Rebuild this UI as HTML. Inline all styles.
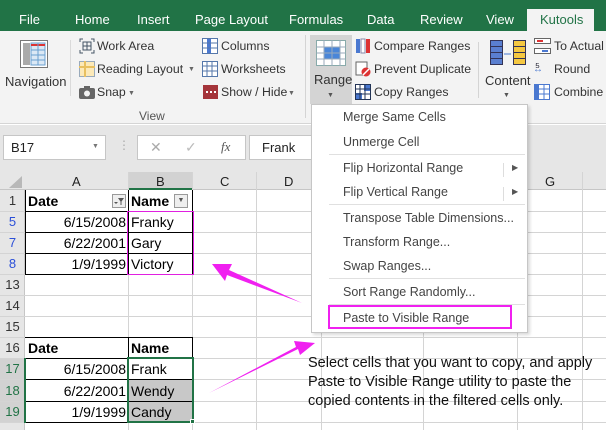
<!DOCTYPE html>
<html><head><meta charset="utf-8"><style>
*{margin:0;padding:0;box-sizing:border-box}
body{width:606px;height:430px;overflow:hidden;position:relative;background:#fff;font-family:"Liberation Sans",sans-serif;font-size:13px;color:#222}
.a{position:absolute;white-space:nowrap}
.tab{position:absolute;top:12px;color:#fff;font-size:13px}
.rb{color:#333;font-size:12.3px}
.vl{position:absolute;background:#d4d4d4;width:1px}
.hl{position:absolute;background:#d4d4d4;height:1px}
.rh{position:absolute;left:0;width:25px;text-align:center;font-size:13px;color:#333}
.cell{position:absolute;font-size:14px;color:#000}
.mi{position:absolute;left:343px;font-size:12.5px;color:#444}
.sep{position:absolute;left:329px;width:196px;height:1px;background:#e0e0e0}
</style></head><body>
<div class="a" style="left:0;top:0;width:606px;height:31px;background:#217346"></div>
<div class="tab" style="left:19px">File</div>
<div class="tab" style="left:75px">Home</div>
<div class="tab" style="left:137px">Insert</div>
<div class="tab" style="left:195px">Page Layout</div>
<div class="tab" style="left:289px">Formulas</div>
<div class="tab" style="left:367px">Data</div>
<div class="tab" style="left:420px">Review</div>
<div class="tab" style="left:486px">View</div>
<div class="a" style="left:527px;top:9px;width:67px;height:22px;background:#f3f3f3"></div>
<div class="tab" style="left:540px;color:#217346">Kutools</div>
<div class="a" style="left:0;top:31px;width:606px;height:93px;background:#f3f3f3;border-bottom:1px solid #d5d5d5"></div>
<svg class="a" style="left:20px;top:40px" width="28" height="28"><rect x="0.5" y="0.5" width="27" height="27" fill="#fff" stroke="#777"/><rect x="3" y="3" width="7" height="22" fill="#aaa"/><rect x="11" y="3" width="14" height="22" fill="#dbe8f5" stroke="#6a9fd0"/><line x1="11" y1="5" x2="25" y2="5" stroke="#d33" stroke-width="2"/><path d="M11 10H25M11 15H25M11 20H25M18 3V25" stroke="#6a9fd0"/></svg>
<div class="a rb" style="left:5px;top:74px;font-size:13px">Navigation</div>
<div class="vl" style="left:70px;top:40px;height:56px;background:#dadada"></div>
<svg class="a" style="left:79px;top:38px" width="16" height="16"><path d="M1 4V1H4M12 1H15V4M15 12V15H12M4 15H1V12" fill="none" stroke="#456" /><rect x="4" y="4" width="8" height="8" fill="none" stroke="#456"/><path d="M4 8H12M8 4V12" stroke="#456"/></svg>
<div class="a rb" style="left:97px;top:39px">Work Area</div>
<svg class="a" style="left:79px;top:61px" width="16" height="16"><rect x="0.5" y="0.5" width="15" height="15" fill="#fce9b8" stroke="#9ab"/><path d="M0 6H16M6 0V16" stroke="#e8c060" stroke-width="2"/></svg>
<div class="a rb" style="left:97px;top:62px">Reading Layout</div>
<div class="a" style="left:188px;top:66px;font-size:7px;color:#666">▼</div>
<svg class="a" style="left:79px;top:85px" width="16" height="14"><rect x="0" y="3" width="16" height="11" rx="2" fill="#666"/><rect x="5" y="1" width="6" height="3" fill="#666"/><circle cx="8" cy="8.5" r="3" fill="#f3f3f3"/></svg>
<div class="a rb" style="left:97px;top:85px">Snap</div>
<div class="a" style="left:128px;top:90px;font-size:7px;color:#666">▼</div>
<svg class="a" style="left:202px;top:38px" width="16" height="16"><rect x="0.5" y="0.5" width="15" height="15" fill="#fff" stroke="#5577aa"/><rect x="5" y="1" width="4" height="14" fill="#4a78d0"/><path d="M0.5 5H15.5M0.5 10H15.5" stroke="#5577aa"/></svg>
<div class="a rb" style="left:221px;top:39px">Columns</div>
<svg class="a" style="left:202px;top:61px" width="16" height="16"><rect x="0.5" y="0.5" width="15" height="15" fill="#fff" stroke="#5577aa"/><path d="M0.5 5H15.5M0.5 10H15.5M5 0V16M10 0V16" stroke="#5577aa"/></svg>
<div class="a rb" style="left:221px;top:62px">Worksheets</div>
<svg class="a" style="left:203px;top:85px" width="15" height="14"><rect width="15" height="14" fill="#a4343a"/><path d="M3 7h2M7 7h2M11 7h2" stroke="#fff" stroke-width="2"/></svg>
<div class="a rb" style="left:221px;top:85px">Show / Hide</div>
<div class="a" style="left:288px;top:90px;font-size:7px;color:#666">▼</div>
<div class="a" style="left:139px;top:109px;font-size:12px;color:#555">View</div>
<div class="vl" style="left:305px;top:35px;height:83px"></div>
<div class="a" style="left:310px;top:35px;width:42px;height:69px;background:#d4d4d4"></div>
<svg class="a" style="left:316px;top:40px" width="30" height="26"><rect x="0.5" y="0.5" width="29" height="25" fill="#fff" stroke="#8aa"/><rect x="8" y="7" width="16" height="12" fill="#4a86d8"/><path d="M0.5 7H29.5M0.5 13H29.5M0.5 19H29.5M8 0V26M16 0V26M24 0V26" stroke="#9ab"/></svg>
<div class="a rb" style="left:314px;top:72px;font-size:13px">Range</div>
<div class="a" style="left:327px;top:92px;font-size:7px;color:#555">▼</div>
<svg class="a" style="left:355px;top:38px" width="16" height="16"><rect x="1" y="1" width="4" height="14" fill="#4a78d0"/><rect x="6" y="1" width="4" height="14" fill="#fff" stroke="#88a"/><rect x="11" y="1" width="4" height="14" fill="#d33"/></svg>
<div class="a rb" style="left:374px;top:39px">Compare Ranges</div>
<svg class="a" style="left:355px;top:61px" width="16" height="16"><rect x="1" y="1" width="11" height="13" fill="#fff" stroke="#666"/><circle cx="11" cy="11" r="4.5" fill="#d33"/><path d="M8 14L14 8" stroke="#fff" stroke-width="1.5"/></svg>
<div class="a rb" style="left:374px;top:62px">Prevent Duplicate</div>
<svg class="a" style="left:355px;top:84px" width="16" height="16"><rect x="0.5" y="0.5" width="15" height="15" fill="#fff" stroke="#235"/><rect x="1" y="9" width="6" height="6" fill="#4a78d0"/><rect x="9" y="1" width="6" height="6" fill="#4a78d0"/><path d="M0 5H16M0 10H16M5 0V16M10 0V16" stroke="#235"/></svg>
<div class="a rb" style="left:374px;top:85px">Copy Ranges</div>
<div class="vl" style="left:478px;top:42px;height:56px"></div>
<svg class="a" style="left:490px;top:40px" width="38" height="30"><g stroke="#335"><rect x="0.5" y="0.5" width="12" height="6" fill="#5a7fd0"/><rect x="0.5" y="6.5" width="12" height="6" fill="#5a7fd0"/><rect x="0.5" y="12.5" width="12" height="6" fill="#5a7fd0"/><rect x="0.5" y="18.5" width="12" height="6" fill="#5a7fd0"/><rect x="23.5" y="0.5" width="12" height="6" fill="#f5c842"/><rect x="23.5" y="6.5" width="12" height="6" fill="#f5c842"/><rect x="23.5" y="12.5" width="12" height="6" fill="#f5c842"/><rect x="23.5" y="18.5" width="12" height="6" fill="#f5c842"/></g><path d="M14 14H21" stroke="#4a78d0"/></svg>
<div class="a rb" style="left:485px;top:73px;font-size:13px">Content</div>
<div class="a" style="left:503px;top:92px;font-size:7px;color:#555">▼</div>
<svg class="a" style="left:534px;top:38px" width="17" height="16"><rect x="0.5" y="0.5" width="16" height="5" fill="#fff" stroke="#666"/><rect x="0.5" y="10.5" width="16" height="5" fill="#fff" stroke="#666"/><path d="M3 3H9" stroke="#d33" stroke-width="2"/><path d="M8 13H14" stroke="#4a78d0" stroke-width="2"/></svg>
<div class="a rb" style="left:554px;top:39px">To Actual</div>
<div class="a" style="left:535px;top:60px;font-size:12px;color:#223">⁵</div>
<div class="a" style="left:533px;top:64px;font-size:10px;color:#4a78d0">↔</div>
<div class="a rb" style="left:554px;top:62px">Round</div>
<svg class="a" style="left:534px;top:84px" width="16" height="16"><rect x="0.5" y="0.5" width="15" height="15" fill="#fff" stroke="#4a78d0"/><rect x="1" y="1" width="4" height="14" fill="#4a78d0"/><path d="M0 5H16M0 10H16M10 0V16" stroke="#4a78d0"/></svg>
<div class="a rb" style="left:554px;top:85px">Combine</div>
<div class="a" style="left:0;top:125px;width:606px;height:47px;background:#e6e6e6"></div>
<div class="a" style="left:3px;top:135px;width:103px;height:25px;background:#fff;border:1px solid #c6c6c6"></div>
<div class="a" style="left:11px;top:140px;font-size:13px">B17</div>
<div class="a" style="left:92px;top:143px;font-size:7px;color:#777">▼</div>
<div class="a" style="left:118px;top:138px;color:#aaa;font-size:12px">⋮</div>
<div class="a" style="left:137px;top:135px;width:109px;height:25px;background:#fff;border:1px solid #c6c6c6"></div>
<div class="a" style="left:150px;top:139px;color:#aaa;font-size:14px">✕</div>
<div class="a" style="left:185px;top:139px;color:#bbb;font-size:14px">✓</div>
<div class="a" style="left:221px;top:139px;color:#555;font-size:13px;font-style:italic;font-family:'Liberation Serif',serif">fx</div>
<div class="a" style="left:249px;top:135px;width:70px;height:25px;background:#fff;border:1px solid #c6c6c6"></div>
<div class="a" style="left:262px;top:140px;font-size:13px">Frank</div>
<div class="a" style="left:0;top:172px;width:606px;height:18px;background:#e6e6e6;border-bottom:1px solid #c6c6c6"></div>
<div class="a" style="left:0;top:190px;width:25px;height:240px;background:#e6e6e6;border-right:1px solid #c6c6c6"></div>
<svg class="a" style="left:6px;top:175px" width="17" height="14"><path d="M16 1V13H3Z" fill="#b8b8b8"/></svg>
<div class="a" style="left:128px;top:172px;width:64px;height:18px;background:#d2d2d2;border-bottom:2px solid #217346"></div>
<div class="a" style="left:0;top:358px;width:25px;height:64px;background:#d2d2d2"></div>
<div class="a" style="left:72px;top:174px;font-size:13px">A</div>
<div class="a" style="left:156px;top:174px;font-size:13px">B</div>
<div class="a" style="left:220px;top:174px;font-size:13px">C</div>
<div class="a" style="left:284px;top:174px;font-size:13px">D</div>
<div class="a" style="left:545px;top:174px;font-size:13px">G</div>
<div class="vl" style="left:128px;top:172px;height:258px"></div>
<div class="vl" style="left:192px;top:172px;height:258px"></div>
<div class="vl" style="left:256px;top:172px;height:258px"></div>
<div class="vl" style="left:321px;top:172px;height:258px"></div>
<div class="vl" style="left:423px;top:172px;height:258px"></div>
<div class="vl" style="left:517px;top:172px;height:258px"></div>
<div class="vl" style="left:582px;top:172px;height:258px"></div>
<div class="hl" style="left:0;top:211px;width:606px"></div>
<div class="hl" style="left:0;top:232px;width:606px"></div>
<div class="hl" style="left:0;top:253px;width:606px"></div>
<div class="hl" style="left:0;top:274px;width:606px"></div>
<div class="hl" style="left:0;top:295px;width:606px"></div>
<div class="hl" style="left:0;top:316px;width:606px"></div>
<div class="hl" style="left:0;top:337px;width:606px"></div>
<div class="hl" style="left:0;top:358px;width:606px"></div>
<div class="hl" style="left:0;top:379px;width:606px"></div>
<div class="hl" style="left:0;top:401px;width:606px"></div>
<div class="hl" style="left:0;top:422px;width:606px"></div>
<div class="rh" style="top:193px">1</div>
<div class="rh" style="top:214px;color:#2b4fd8">5</div>
<div class="rh" style="top:235px;color:#2b4fd8">7</div>
<div class="rh" style="top:256px;color:#2b4fd8">8</div>
<div class="rh" style="top:277px">13</div>
<div class="rh" style="top:298px">14</div>
<div class="rh" style="top:319px">15</div>
<div class="rh" style="top:340px">16</div>
<div class="rh" style="top:361px;color:#217346">17</div>
<div class="rh" style="top:383px;color:#217346">18</div>
<div class="rh" style="top:404px;color:#217346">19</div>
<div class="a" style="left:25px;top:190px;width:168px;height:85px;border:1px solid #000;border-top:none"></div>
<div class="a" style="left:128px;top:190px;width:1px;height:85px;background:#000"></div>
<div class="a" style="left:25px;top:211px;width:168px;height:1px;background:#000"></div>
<div class="a" style="left:25px;top:232px;width:168px;height:1px;background:#000"></div>
<div class="a" style="left:25px;top:253px;width:168px;height:1px;background:#000"></div>
<div class="a" style="left:127px;top:211px;width:67px;height:64px;border:1px solid #e020e0"></div>
<div class="cell" style="left:28px;top:193px;font-weight:bold">Date</div>
<svg class="a" style="left:112px;top:194px" width="14" height="14"><rect x="0.5" y="0.5" width="13" height="13" fill="#eee" stroke="#999"/><path d="M6 4H12L9.5 7.5V11H8.5V7.5Z" fill="#555"/><path d="M2 8L4 10L6 8Z" fill="#555"/></svg>
<div class="cell" style="left:131px;top:193px;font-weight:bold">Name</div>
<div class="a" style="left:174px;top:194px;width:14px;height:14px;border:1px solid #999;background:#eee;font-size:7px;text-align:center;line-height:12px;color:#555">▼</div>
<div class="cell" style="left:25px;width:101px;text-align:right;top:214px">6/15/2008</div>
<div class="cell" style="left:131px;top:214px">Franky</div>
<div class="cell" style="left:25px;width:101px;text-align:right;top:235px">6/22/2001</div>
<div class="cell" style="left:131px;top:235px">Gary</div>
<div class="cell" style="left:25px;width:101px;text-align:right;top:256px">1/9/1999</div>
<div class="cell" style="left:131px;top:256px">Victory</div>
<div class="a" style="left:129px;top:380px;width:63px;height:42px;background:#c8c8c8"></div>
<div class="a" style="left:25px;top:337px;width:168px;height:86px;border:1px solid #000;border-left:none"></div>
<div class="a" style="left:128px;top:337px;width:1px;height:86px;background:#000"></div>
<div class="a" style="left:25px;top:358px;width:168px;height:1px;background:#000"></div>
<div class="a" style="left:25px;top:379px;width:168px;height:1px;background:#000"></div>
<div class="a" style="left:25px;top:401px;width:168px;height:1px;background:#000"></div>
<div class="a" style="left:24px;top:358px;width:2px;height:65px;background:#217346"></div>
<div class="a" style="left:127px;top:357px;width:67px;height:66px;border:2px solid #217346"></div>
<div class="a" style="left:190px;top:419px;width:5px;height:5px;background:#217346;border:1px solid #fff"></div>
<div class="cell" style="left:28px;top:340px;font-weight:bold">Date</div>
<div class="cell" style="left:131px;top:340px;font-weight:bold">Name</div>
<div class="cell" style="left:25px;width:101px;text-align:right;top:361px">6/15/2008</div>
<div class="cell" style="left:131px;top:361px">Frank</div>
<div class="cell" style="left:25px;width:101px;text-align:right;top:383px">6/22/2001</div>
<div class="cell" style="left:131px;top:383px">Wendy</div>
<div class="cell" style="left:25px;width:101px;text-align:right;top:404px">1/9/1999</div>
<div class="cell" style="left:131px;top:404px">Candy</div>
<div class="a" style="left:311px;top:104px;width:217px;height:229px;background:#fff;border:1px solid #c6c6c6;box-shadow:2px 2px 3px rgba(0,0,0,.15)"></div>
<div class="mi" style="top:110px">Merge Same Cells</div>
<div class="mi" style="top:135px">Unmerge Cell</div>
<div class="sep" style="top:154px"></div>
<div class="mi" style="top:161px">Flip Horizontal Range</div>
<div class="mi" style="top:185px">Flip Vertical Range</div>
<div class="a" style="left:503px;top:163px;width:1px;height:14px;background:#ddd"></div>
<div class="a" style="left:503px;top:187px;width:1px;height:14px;background:#ddd"></div>
<div class="a" style="left:512px;top:163px;font-size:8px;color:#555">▶</div>
<div class="a" style="left:512px;top:187px;font-size:8px;color:#555">▶</div>
<div class="sep" style="top:204px"></div>
<div class="mi" style="top:211px">Transpose Table Dimensions...</div>
<div class="mi" style="top:235px">Transform Range...</div>
<div class="mi" style="top:259px">Swap Ranges...</div>
<div class="sep" style="top:278px"></div>
<div class="mi" style="top:285px">Sort Range Randomly...</div>
<div class="sep" style="top:304px"></div>
<div class="a" style="left:328px;top:305px;width:184px;height:24px;border:2px solid #f020f0"></div>
<div class="mi" style="top:311px">Paste to Visible Range</div>
<svg class="a" style="left:0;top:0" width="606" height="430">
<path d="M302 303L229 270L232 264L212 264L225 281L227 275Z" fill="#f020f0"/>
<path d="M209 393L298 349L300 355L315 343L294 341L296 347Z" fill="#f020f0"/>
</svg>
<div class="a" style="left:308px;top:354px;font-size:14.5px;line-height:19px;color:#111">Select cells that you want to copy, and apply<br>Paste to Visible Range utility to paste the<br>copied contents in the filtered cells only.</div>
</body></html>
